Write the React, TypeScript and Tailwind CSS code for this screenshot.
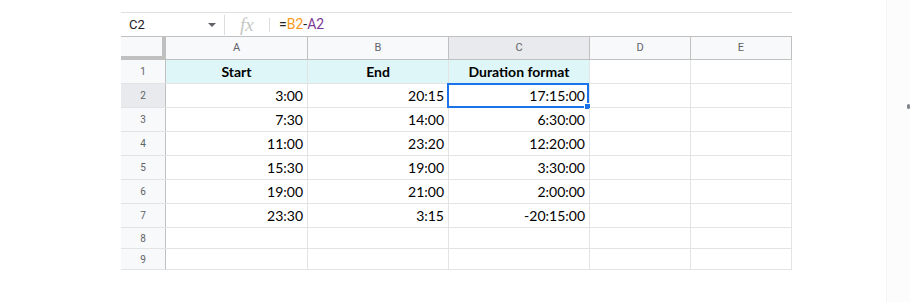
import React from 'react'

const cols = [
  { key: 'A', w: 'w-[142px]' },
  { key: 'B', w: 'w-[141px]' },
  { key: 'C', w: 'w-[141px]' },
  { key: 'D', w: 'w-[101px]' },
  { key: 'E', w: 'w-[101px]' },
]

const rows: { n: number; h: string; cells: string[] }[] = [
  { n: 1, h: 'h-[24px]', cells: ['Start', 'End', 'Duration format', '', ''] },
  { n: 2, h: 'h-[24px]', cells: ['3:00', '20:15', '17:15:00', '', ''] },
  { n: 3, h: 'h-[24px]', cells: ['7:30', '14:00', '6:30:00', '', ''] },
  { n: 4, h: 'h-[24px]', cells: ['11:00', '23:20', '12:20:00', '', ''] },
  { n: 5, h: 'h-[24px]', cells: ['15:30', '19:00', '3:30:00', '', ''] },
  { n: 6, h: 'h-[24px]', cells: ['19:00', '21:00', '2:00:00', '', ''] },
  { n: 7, h: 'h-[24px]', cells: ['23:30', '3:15', '-20:15:00', '', ''] },
  { n: 8, h: 'h-[21px]', cells: ['', '', '', '', ''] },
  { n: 9, h: 'h-[21px]', cells: ['', '', '', '', ''] },
]

function FormulaBar() {
  return (
    <div className="flex h-[24px] items-center border-t border-[#e0e0e0] font-['Roboto',sans-serif] text-[13px] text-[#202124]">
      <div className="flex w-[103px] items-center justify-between pl-[8px] pr-[8px]">
        <span>C2</span>
        <span className="mt-[1px] h-0 w-0 border-x-[4px] border-t-[4px] border-x-transparent border-t-[#5f6368]" />
      </div>
      <div className="h-[20px] w-px bg-[#dadce0]" />
      <span className="ml-[15px] w-[29px] font-['Liberation_Serif',serif] text-[19px] italic leading-none text-[#c4c7c5]">
        fx
      </span>
      <div className="h-[14px] w-px bg-[#dadce0]" />
      <div className="ml-[9px] text-[14px]">
        <span>=</span>
        <span className="text-[#f7981d]">B2</span>
        <span>-</span>
        <span className="text-[#7e3794]">A2</span>
      </div>
    </div>
  )
}

export default function App() {
  return (
    <div className="flex h-[302px] w-[910px] overflow-hidden bg-white">
      <div className="w-[121px] shrink-0" />
      <div className="w-[671px] shrink-0 pt-[12px]">
        <FormulaBar />
        <div className="font-['Lato',sans-serif] text-[14px] text-black">
          {/* column headers */}
          <div className="flex h-[24px] border-y border-[#c0c0c0] bg-[#f8f9fa] font-['Roboto',sans-serif] text-[11px] text-[#5f6368]">
            <div className="h-[23px] w-[45px] shrink-0 border-r-4 border-b-4 border-[#c0c0c0]" />
            {cols.map(c => (
              <div
                key={c.key}
                className={`${c.w} flex shrink-0 items-center justify-center border-r border-[#c0c0c0] ${c.key === 'C' ? 'bg-[#e8eaed]' : ''}`}
              >
                {c.key}
              </div>
            ))}
          </div>
          {rows.map(r => (
            <div key={r.n} className={`flex ${r.h} border-b border-[#e2e3e3]`}>
              <div
                className={`flex w-[45px] shrink-0 items-center justify-center border-r border-[#c0c0c0] font-['Roboto',sans-serif] text-[10px] text-[#5f6368] ${r.n === 2 ? 'bg-[#e8eaed]' : 'bg-[#f8f9fa]'}`}
              >
                {r.n}
              </div>
              {cols.map((c, i) => {
                const isHead = r.n === 1 && i < 3
                const selected = r.n === 2 && c.key === 'C'
                return (
                  <div
                    key={c.key}
                    className={`${c.w} relative flex shrink-0 items-center border-r border-[#e2e3e3] px-[4px] ${isHead ? 'justify-center bg-[#def6f8] font-bold' : 'justify-end'}`}
                  >
                    {r.cells[i]}
                    {selected && (
                      <div className="absolute left-[-2px] top-[-1px] right-[0px] bottom-[-1px] border-2 border-[#1a73e8]">
                        <div className="absolute right-[-4px] bottom-[-4px] h-[7px] w-[7px] border border-white bg-[#1a73e8]" />
                      </div>
                    )}
                  </div>
                )
              })}
            </div>
          ))}
        </div>
      </div>
      <div className="flex-1" />
      <div className="relative w-[24px] shrink-0 border-l border-[#f3f4f5] bg-[#fcfcfc]">
        <div className="absolute left-[20px] top-[104px] h-[5px] w-[3px] rounded-full bg-[#80868b]" />
      </div>
    </div>
  )
}
